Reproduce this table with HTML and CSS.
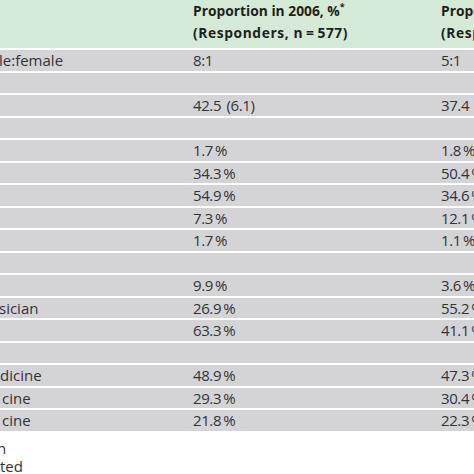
FILE: index.html
```html
<!DOCTYPE html>
<html>
<head>
<meta charset="utf-8">
<link rel="stylesheet" href="styles.css">
</head>
<body>
<div class="frame">
  <table class="data">
    <thead>
      <tr class="head">
        <th class="c1"></th>
        <th class="c2"><span class="hl1">Proportion in 2006, %<sup>*</sup></span><span class="hl2">(Responders, n&#8201;=&#8201;577)</span></th>
        <th class="c3"><span class="hl1">Proportion</span><span class="hl2">(Responders</span></th>
      </tr>
    </thead>
    <tbody>
      <tr><td class="c1 lab cut1">le:female</td><td class="c2">8:1</td><td class="c3">5:1</td></tr>
      <tr><td class="c1"></td><td class="c2"></td><td class="c3"></td></tr>
      <tr><td class="c1"></td><td class="c2">42.5 (6.1)</td><td class="c3">37.4</td></tr>
      <tr><td class="c1"></td><td class="c2"></td><td class="c3"></td></tr>
      <tr><td class="c1"></td><td class="c2">1.7&#8201;%</td><td class="c3">1.8&#8201;%</td></tr>
      <tr><td class="c1"></td><td class="c2">34.3&#8201;%</td><td class="c3">50.4&#8201;%</td></tr>
      <tr><td class="c1"></td><td class="c2">54.9&#8201;%</td><td class="c3">34.6&#8201;%</td></tr>
      <tr><td class="c1"></td><td class="c2">7.3&#8201;%</td><td class="c3">12.1&#8201;%</td></tr>
      <tr><td class="c1"></td><td class="c2">1.7&#8201;%</td><td class="c3">1.1&#8201;%</td></tr>
      <tr><td class="c1"></td><td class="c2"></td><td class="c3"></td></tr>
      <tr><td class="c1"></td><td class="c2">9.9&#8201;%</td><td class="c3">3.6&#8201;%</td></tr>
      <tr><td class="c1 lab cut1">sician</td><td class="c2">26.9&#8201;%</td><td class="c3">55.2&#8201;%</td></tr>
      <tr><td class="c1"></td><td class="c2">63.3&#8201;%</td><td class="c3">41.1&#8201;%</td></tr>
      <tr><td class="c1"></td><td class="c2"></td><td class="c3"></td></tr>
      <tr><td class="c1 lab">dicine</td><td class="c2">48.9&#8201;%</td><td class="c3">47.3&#8201;%</td></tr>
      <tr><td class="c1 lab cut2">cine</td><td class="c2">29.3&#8201;%</td><td class="c3">30.4&#8201;%</td></tr>
      <tr><td class="c1 lab cut2">cine</td><td class="c2">21.8&#8201;%</td><td class="c3">22.3&#8201;%</td></tr>
    </tbody>
  </table>
  <div class="notes">
    <p class="note note-n">n</p>
    <p class="note">ted</p>
  </div>
</div>
</body>
</html>
```

FILE: styles.css
```css
html, body {
  margin: 0;
  padding: 0;
  background: #ffffff;
}

.frame {
  width: 474px;
  height: 474px;
  overflow: hidden;
  font-family: "Open Sans", "DejaVu Sans", sans-serif;
  color: #333335;
}

.data {
  border-collapse: collapse;
  table-layout: fixed;
  width: 620px;
  font-size: 15px;
}

.data .c1 { width: 193px; }
.data .c2 { width: 248px; }
.data .c3 { width: 179px; }

.data th,
.data td {
  padding: 0;
  text-align: left;
  white-space: nowrap;
  overflow: hidden;
  vertical-align: middle;
}

.head th {
  background: #d5ead6;
  height: 48px;
  font-weight: 700;
  font-size: 13.8px;
  color: #1f1f21;
  line-height: 22px;
  vertical-align: top;
}

.hl1,
.hl2 {
  display: block;
}

.hl2 {
  letter-spacing: 0.6px;
}

.head sup {
  font-size: 9px;
  line-height: 0;
  vertical-align: 6px;
}

.data tbody tr {
  border-top: 2px solid #ffffff;
}

.data tbody td {
  background: #d4d4d6;
  height: 20.5px;
  line-height: 20px;
  letter-spacing: -0.4px;
  word-spacing: 2px;
}

.data tbody td.lab {
  letter-spacing: 0;
  word-spacing: 0;
}

.cut1 { text-indent: -1px; }
.cut2 { text-indent: 2px; }

.notes {
  padding-top: 8px;
  font-size: 15px;
  line-height: 18px;
}

.note {
  margin: 0;
}

.note-n {
  text-indent: -3px;
}
```
